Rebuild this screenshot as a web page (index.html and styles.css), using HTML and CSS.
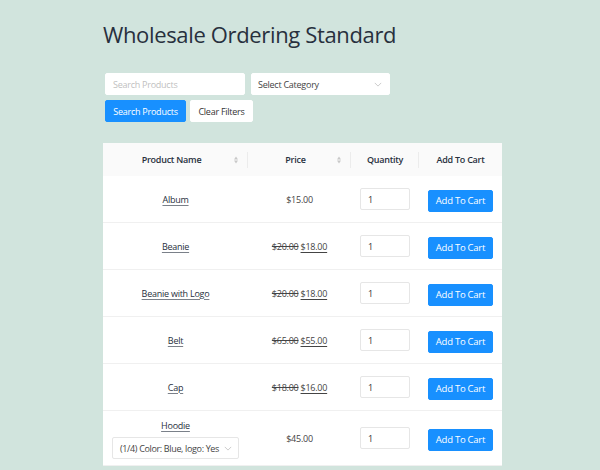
FILE: index.html
```html
<!DOCTYPE html>
<html>
<head>
<meta charset="utf-8">
<link rel="stylesheet" href="styles.css">
</head>
<body>
<div class="page">
  <h1 class="title">Wholesale Ordering Standard</h1>
  <div class="filters">
    <div class="filter-row">
      <input class="search" type="text" placeholder="Search Products">
      <div class="select cat"><span>Select Category</span><svg class="chev" viewBox="0 0 10 6" width="8" height="5"><path d="M1 1l4 4 4-4" fill="none" stroke="#bfbfbf" stroke-width="1"/></svg></div>
    </div>
    <div class="filter-row">
      <button class="btn primary">Search Products</button>
      <button class="btn">Clear Filters</button>
    </div>
  </div>
  <div class="table">
    <div class="row head">
      <div class="cell c1"><span class="htext">Product Name</span><span class="sorter"><i class="up"></i><i class="down"></i></span><span class="sep"></span></div>
      <div class="cell c2"><span class="htext">Price</span><span class="sorter"><i class="up"></i><i class="down"></i></span><span class="sep"></span></div>
      <div class="cell c3"><span class="htext nosort">Quantity</span><span class="sep"></span></div>
      <div class="cell c4"><span class="htext nosort">Add To Cart</span></div>
    </div>
    <div class="row">
      <div class="cell c1"><a href="#">Album</a></div>
      <div class="cell c2"><span class="price">$15.00</span></div>
      <div class="cell c3"><input class="qty" type="text" value="1"></div>
      <div class="cell c4"><button class="btn primary add">Add To Cart</button></div>
    </div>
    <div class="row">
      <div class="cell c1"><a href="#">Beanie</a></div>
      <div class="cell c2"><span class="price"><del>$20.00</del> <ins>$18.00</ins></span></div>
      <div class="cell c3"><input class="qty" type="text" value="1"></div>
      <div class="cell c4"><button class="btn primary add">Add To Cart</button></div>
    </div>
    <div class="row">
      <div class="cell c1"><a href="#">Beanie with Logo</a></div>
      <div class="cell c2"><span class="price"><del>$20.00</del> <ins>$18.00</ins></span></div>
      <div class="cell c3"><input class="qty" type="text" value="1"></div>
      <div class="cell c4"><button class="btn primary add">Add To Cart</button></div>
    </div>
    <div class="row">
      <div class="cell c1"><a href="#">Belt</a></div>
      <div class="cell c2"><span class="price"><del>$65.00</del> <ins>$55.00</ins></span></div>
      <div class="cell c3"><input class="qty" type="text" value="1"></div>
      <div class="cell c4"><button class="btn primary add">Add To Cart</button></div>
    </div>
    <div class="row">
      <div class="cell c1"><a href="#">Cap</a></div>
      <div class="cell c2"><span class="price"><del>$18.00</del> <ins>$16.00</ins></span></div>
      <div class="cell c3"><input class="qty" type="text" value="1"></div>
      <div class="cell c4"><button class="btn primary add">Add To Cart</button></div>
    </div>
    <div class="row tall">
      <div class="cell c1 stack"><a href="#">Hoodie</a><div class="select variant"><span>(1/4) Color: Blue, logo: Yes</span><svg class="chev" viewBox="0 0 10 6" width="8" height="5"><path d="M1 1l4 4 4-4" fill="none" stroke="#bfbfbf" stroke-width="1"/></svg></div></div>
      <div class="cell c2"><span class="price">$45.00</span></div>
      <div class="cell c3"><input class="qty" type="text" value="1"></div>
      <div class="cell c4"><button class="btn primary add">Add To Cart</button></div>
    </div>
  </div>
</div>
</body>
</html>
```
FILE: styles.css
```css
html, body {
  margin: 0;
  padding: 0;
  background: #d1e4dd;
  height: 470px;
  overflow: hidden;
}
body {
  font-family: "Open Sans", "Noto Sans", sans-serif;
  color: #28303d;
  font-size: 9px;
  letter-spacing: -0.25px;
}
.page {
  width: 399px;
  margin-left: 103px;
  padding-top: 20px;
}
.title {
  margin: 0;
  font-size: 22px;
  font-weight: 400;
  line-height: 29px;
  letter-spacing: -0.35px;
  color: #28303d;
}
.filters {
  margin-top: 24px;
  padding-left: 2px;
  display: flex;
  flex-direction: column;
  gap: 5px;
}
.filter-row {
  display: flex;
  gap: 6px;
}
.filter-row + .filter-row { gap: 4px; }
.search, .select, .qty {
  box-sizing: border-box;
  height: 22px;
  border: 1px solid #e6e6e6;
  background: #fff;
  border-radius: 2px;
  font-family: inherit;
  font-size: 9px;
  letter-spacing: -0.25px;
  color: #333;
  padding: 0 7px;
  outline: none;
  white-space: nowrap;
}
.search { width: 140px; border-color: #fff; }
.search::placeholder { color: #bfbfbf; }
.select {
  display: flex;
  align-items: center;
  justify-content: space-between;
  color: #444;
}
.cat { width: 139px; border-color: #fff; padding-left: 6px; }
.chev { flex: none; }
.btn {
  box-sizing: border-box;
  height: 22px;
  border: 1px solid #fff;
  background: #fff;
  border-radius: 2px;
  font-family: inherit;
  font-size: 9px;
  letter-spacing: -0.25px;
  color: #333;
  padding: 0 8px;
  cursor: pointer;
}
.btn.primary {
  background: #1890ff;
  border-color: #1890ff;
  color: #fff;
}
.filter-row .btn.primary { width: 81px; padding: 0; }
.filter-row .btn:not(.primary) { width: 63px; padding: 0; }

.table {
  margin-top: 21px;
  background: #fff;
}
.row {
  display: grid;
  grid-template-columns: 145px 103px 68px 83px;
  height: 47px;
  box-sizing: border-box;
  border-bottom: 1px solid #f0f0f0;
}
.row.head {
  height: 33px;
  background: #fafafa;
  border-bottom: none;
}
.row.tall { height: 55px; }
.cell {
  position: relative;
  display: flex;
  align-items: center;
  justify-content: center;
  color: #444;
}
.head .cell {
  font-weight: 600;
  color: #28303d;
}
.htext { padding-right: 8px; }
.htext.nosort { padding-right: 0; }
.sorter {
  position: absolute;
  right: 10px;
  top: 50%;
  transform: translateY(-50%);
  display: flex;
  flex-direction: column;
  gap: 1px;
}
.sorter i {
  display: block;
  width: 0;
  height: 0;
  border-left: 2.5px solid transparent;
  border-right: 2.5px solid transparent;
}
.sorter .up { border-bottom: 3px solid #c8c8c8; }
.sorter .down { border-top: 3px solid #c8c8c8; }
.sep {
  position: absolute;
  right: 0;
  top: 50%;
  height: 16px;
  margin-top: -8px;
  width: 1px;
  background: #ececec;
}
a {
  color: #28303d;
  text-decoration: underline;
  text-decoration-color: #7a8089;
  text-underline-offset: 2px;
}
del { color: #444; }
ins { text-decoration: underline; text-underline-offset: 2px; }
.qty { width: 50px; }
.add { width: 65px; padding: 0; margin-top: 3px; font-size: 9.5px; }
.stack {
  flex-direction: column;
  gap: 5px;
  padding-top: 2px;
}
.variant { width: 127px; color: #444; padding: 0 6px 0 7px; letter-spacing: -0.35px; }
```
